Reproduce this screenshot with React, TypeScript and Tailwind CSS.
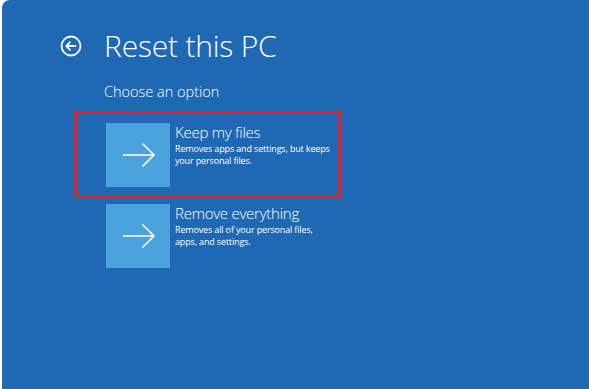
function BackIcon() {
  return (
    <svg width="22" height="22" viewBox="0 0 22 22" fill="none" stroke="white" strokeWidth="1.8">
      <circle cx="11" cy="11" r="9.5" />
      <path d="M15.5 11H6.5M10 7.2L6.3 11L10 14.8" strokeLinecap="round" strokeLinejoin="round" />
    </svg>
  );
}

function TileArrow() {
  return (
    <svg width="34" height="26" viewBox="0 0 34 26" fill="none" stroke="white" strokeWidth="1.6">
      <path d="M1 13H32M20.5 1.5L32 13L20.5 24.5" strokeLinejoin="miter" />
    </svg>
  );
}

function Option({ title, desc }: { title: string; desc: string[] }) {
  return (
    <div className="flex gap-[5px]">
      <div className="w-[64px] h-[64px] bg-[#4aa3dc] flex items-center justify-center shrink-0">
        <div className="ml-[1px]">
          <TileArrow />
        </div>
      </div>
      <div className="flex flex-col">
        <div className="text-[15px] leading-[19px] font-light tracking-[-0.25px] whitespace-nowrap">{title}</div>
        <div className="text-[9px] leading-[12px] mt-[1px] tracking-[-0.15px] whitespace-nowrap">
          {desc.map((d) => (
            <div key={d}>{d}</div>
          ))}
        </div>
      </div>
    </div>
  );
}

export default function App() {
  return (
    <div className="w-[589px] h-[389px] bg-white pl-[2px]">
      <div
        className="w-full h-full bg-[#1f68b4] rounded-tl-[8px] text-white pt-[28px] pl-[58px]"
        style={{ fontFamily: '"Open Sans", "Noto Sans", sans-serif' }}
      >
        <div className="flex items-center">
          <BackIcon />
          <h1 className="ml-[22px] text-[30px] leading-[36px] font-light tracking-[-0.2px]">Reset this PC</h1>
        </div>
        <div className="ml-[44px] mt-[19px] text-[14.5px] leading-[18px] font-light">Choose an option</div>
        <div className="ml-[14px] mt-[10px] w-[267px] h-[87px] border-[3px] border-[#ee1c1c] rounded-[3px] pl-[29px] pt-[9px]">
          <Option title="Keep my files" desc={["Removes apps and settings, but keeps", "your personal files."]} />
        </div>
        <div className="ml-[46px] mt-[6px]">
          <Option title="Remove everything" desc={["Removes all of your personal files,", "apps, and settings."]} />
        </div>
      </div>
    </div>
  );
}
